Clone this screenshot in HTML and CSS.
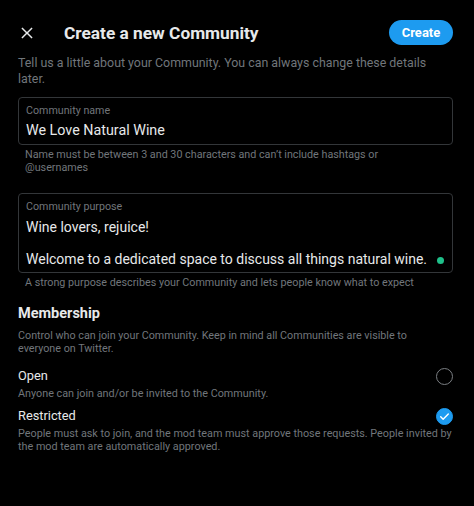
FILE: index.html
```html
<!DOCTYPE html>
<html lang="en">
<head>
<meta charset="utf-8">
<title>Create a new Community</title>
<link rel="stylesheet" href="styles.css">
</head>
<body>
<div class="modal">
  <header class="header">
    <button class="close" aria-label="Close">
      <svg viewBox="0 0 24 24" width="18" height="18"><path fill="#e7e9ea" d="M10.59 12L4.54 5.96l1.42-1.42L12 10.59l6.04-6.05 1.42 1.420L13.41 12l6.05 6.04-1.42 1.42L12 13.41l-6.04 6.05-1.42-1.42L10.59 12z"/></svg>
    </button>
    <h1 class="title">Create a new Community</h1>
    <button class="create">Create</button>
  </header>
  <p class="intro">Tell us a little about your Community. You can always change these details later.</p>

  <div class="field field-name">
    <div class="label">Community name</div>
    <div class="value">We Love Natural Wine</div>
  </div>
  <p class="help help-name">Name must be between 3 and 30 characters and can’t include hashtags or @usernames</p>

  <div class="field field-purpose">
    <div class="label">Community purpose</div>
    <div class="value multi">
      <div class="lines">Wine lovers, rejuice!<br><br>Welcome to a dedicated space to discuss all things natural wine.</div>
      <span class="dot"></span>
    </div>
  </div>
  <p class="help help-purpose">A strong purpose describes your Community and lets people know what to expect</p>

  <h2 class="section">Membership</h2>
  <p class="section-desc">Control who can join your Community. Keep in mind all Communities are visible to everyone on Twitter.</p>

  <div class="option option-open">
    <div class="option-head">
      <span class="option-title">Open</span>
      <span class="radio"></span>
    </div>
    <p class="option-desc">Anyone can join and/or be invited to the Community.</p>
  </div>
  <div class="option option-restricted">
    <div class="option-head">
      <span class="option-title">Restricted</span>
      <span class="radio checked">
        <svg viewBox="0 0 24 24" width="13" height="13"><path fill="none" stroke="#fff" stroke-width="2.6" stroke-linecap="round" stroke-linejoin="round" d="M5 12.5l4.5 4.5L19 7.5"/></svg>
      </span>
    </div>
    <p class="option-desc">People must ask to join, and the mod team must approve those requests. People invited by the mod team are automatically approved.</p>
  </div>
</div>
</body>
</html>
```

FILE: styles.css
```css
* { box-sizing: border-box; }
html, body {
  margin: 0;
  padding: 0;
  background: #000;
}
body {
  font-family: Roboto, "Liberation Sans", sans-serif;
  color: #e7e9ea;
  width: 474px;
  height: 506px;
  overflow: hidden;
}
.modal {
  padding: 20px 21px 0 18px;
}
.header {
  display: flex;
  align-items: center;
  height: 25px;
}
.close {
  background: none;
  border: 0;
  padding: 0;
  width: 18px;
  height: 18px;
  display: flex;
  align-items: center;
  justify-content: center;
}
.close svg { display: block; }
.title {
  margin: 0 0 0 28px;
  font-size: 17.3px;
  font-weight: 700;
  color: #e7e9ea;
  flex: 1;
  line-height: 20px;
}
.create {
  width: 64px;
  height: 25px;
  border-radius: 13px;
  border: 0;
  background: #1d9bf0;
  color: #fff;
  font-family: inherit;
  font-size: 13px;
  font-weight: 700;
  padding: 0;
}
.intro {
  margin: 10px 0 0 0;
  font-size: 12.4px;
  line-height: 16px;
  color: #71767b;
  max-width: 425px;
}
.field {
  border: 1px solid #333639;
  border-radius: 4px;
  padding: 6px 7px 4px 7px;
}
.field-name { margin-top: 10px; }
.field-purpose { margin-top: 19px; padding-bottom: 5px; }
.label {
  font-size: 10.7px;
  line-height: 14px;
  color: #71767b;
}
.value {
  font-size: 14.3px;
  line-height: 20px;
  color: #e7e9ea;
  margin-top: 2px;
}
.value.multi {
  font-size: 14px;
  margin-top: 5px;
  line-height: 16px;
  display: flex;
  align-items: flex-end;
  justify-content: space-between;
}
.dot {
  width: 7px;
  height: 7px;
  border-radius: 50%;
  background: #1fc08a;
  margin: 0 1px 3px 0;
  flex: none;
}
.help {
  margin: 3px 0 0 7px;
  font-size: 10.75px;
  line-height: 13px;
  color: #71767b;
}
.help-name { max-width: 380px; }
.section {
  margin: 15px 0 0 0;
  font-size: 14.5px;
  font-weight: 700;
  line-height: 20px;
  color: #e7e9ea;
}
.section-desc {
  margin: 5px 0 0 0;
  font-size: 10.75px;
  line-height: 13px;
  color: #71767b;
  max-width: 410px;
}
.option-open { margin-top: 11px; }
.option-restricted { margin-top: 5px; }
.option-head {
  display: flex;
  align-items: center;
  justify-content: space-between;
  height: 20px;
}
.option-title {
  font-size: 12.8px;
  line-height: 20px;
  color: #e7e9ea;
}
.radio {
  width: 17px;
  height: 17px;
  border-radius: 50%;
  border: 1.5px solid #7b7f83;
  display: flex;
  align-items: center;
  justify-content: center;
}
.radio.checked {
  background: #1d9bf0;
  border-color: #1d9bf0;
  margin-top: 2px;
}
.option-desc {
  margin: 1px 0 0 0;
  font-size: 10.8px;
  line-height: 13.5px;
  color: #71767b;
}
```
